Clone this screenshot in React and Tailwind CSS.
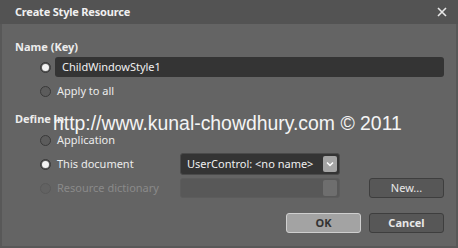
import React from "react";

function Radio({ checked, disabled }) {
  return (
    <div
      className={`w-[11px] h-[11px] rounded-full border flex items-center justify-center ${
        disabled ? "border-[#5a5a5a] bg-[#626262]" : "border-[#3a3a3a] bg-[#5c5c5c]"
      }`}
    >
      {checked && <div className="w-[7px] h-[7px] rounded-full bg-[#f4f4f4]" />}
    </div>
  );
}

function RadioRow({ checked, disabled, label }) {
  return (
    <div className="flex items-center h-[22px]">
      <div className="w-[39px] flex justify-end pr-[3px]">
        <Radio checked={checked} disabled={disabled} />
      </div>
      <span className={`ml-[3px] ${disabled ? "text-[#8a8a8a]" : "text-[#ececec]"}`}>{label}</span>
    </div>
  );
}

export default function App() {
  return (
    <div
      className="relative w-[458px] h-[248px] flex flex-col bg-[#646464] text-[11px] select-none overflow-hidden"
      style={{ fontFamily: '"Noto Sans", "Open Sans", sans-serif' }}
    >
      <div className="h-[24px] bg-[#535353] flex items-center justify-between pl-[15px] pr-[11px]">
        <span className="text-[11px] font-bold text-[#f0f0f0] tracking-[-0.2px]">Create Style Resource</span>
        <svg width="10" height="10" viewBox="0 0 10 10">
          <path d="M1 1 L9 9 M9 1 L1 9" stroke="#e8e8e8" strokeWidth="1.6" />
        </svg>
      </div>
      <div className="flex-1 flex flex-col border-l-2 border-r-2 border-b-2 border-[#585858] pl-[13px] pr-[12px]">
        <div className="mt-[14px] h-[18px] flex items-center font-bold text-[#ececec]">Name (Key)</div>
        <div className="mt-[1px] flex items-center h-[20px]">
          <div className="w-[39px] flex justify-end pr-[3px]">
            <Radio checked />
          </div>
          <div className="ml-[1px] flex-1 h-[20px] rounded-[3px] bg-[#343434] flex items-center pl-[7px] text-[#f0f0f0]">
            ChildWindowStyle1
          </div>
        </div>
        <div className="mt-[3px]">
          <RadioRow label="Apply to all" />
        </div>
        <div className="mt-[9px] h-[17px] flex items-center font-bold text-[#ececec]">Define in</div>
        <div className="mt-[1px]">
          <RadioRow label="Application" />
        </div>
        <div className="mt-[2px] flex items-center justify-between">
          <RadioRow checked label="This document" />
          <div className="mr-[104px] w-[160px] h-[22px] rounded-[3px] bg-[#343434] border border-[#4a4a4a] flex items-center justify-between pl-[6px] pr-[2px] text-[#f0f0f0]">
            <span>UserControl: &lt;no name&gt;</span>
            <div className="w-[14px] h-[16px] bg-[#a5a5a5] rounded-[2px] flex items-center justify-center">
              <svg width="8" height="6" viewBox="0 0 8 6">
                <path d="M1 1.5 L4 4.5 L7 1.5" stroke="#ffffff" strokeWidth="1.5" fill="none" />
              </svg>
            </div>
          </div>
        </div>
        <div className="mt-[2px] flex items-center justify-between">
          <RadioRow disabled label="Resource dictionary" />
          <div className="flex items-center">
            <div className="w-[160px] h-[20px] rounded-[3px] bg-[#585858] border border-[#5c5c5c] flex items-center justify-end pr-[2px]">
              <div className="w-[14px] h-[16px] bg-[#6e6e6e] rounded-[2px]" />
            </div>
            <button className="ml-[29px] w-[75px] h-[20px] rounded-[3px] bg-[#575757] border border-[#3e3e3e] text-[#e8e8e8]">
              New...
            </button>
          </div>
        </div>
        <div className="mt-[14px] flex justify-end gap-[8px]">
          <button className="w-[75px] h-[20px] rounded-[3px] bg-[#a3a3a3] border border-[#cfcfcf] text-[#333] font-bold">
            OK
          </button>
          <button className="w-[75px] h-[20px] rounded-[3px] bg-[#575757] border border-[#3e3e3e] text-[#e8e8e8] font-bold">
            Cancel
          </button>
        </div>
      </div>
      <div
        className="absolute left-[53px] top-[109px] text-[19.4px] text-[#f4f4f4] whitespace-nowrap pointer-events-none"
        style={{ fontFamily: '"Liberation Sans", Arial, sans-serif' }}
      >
        http://www.kunal-chowdhury.com © 2011
      </div>
    </div>
  );
}
